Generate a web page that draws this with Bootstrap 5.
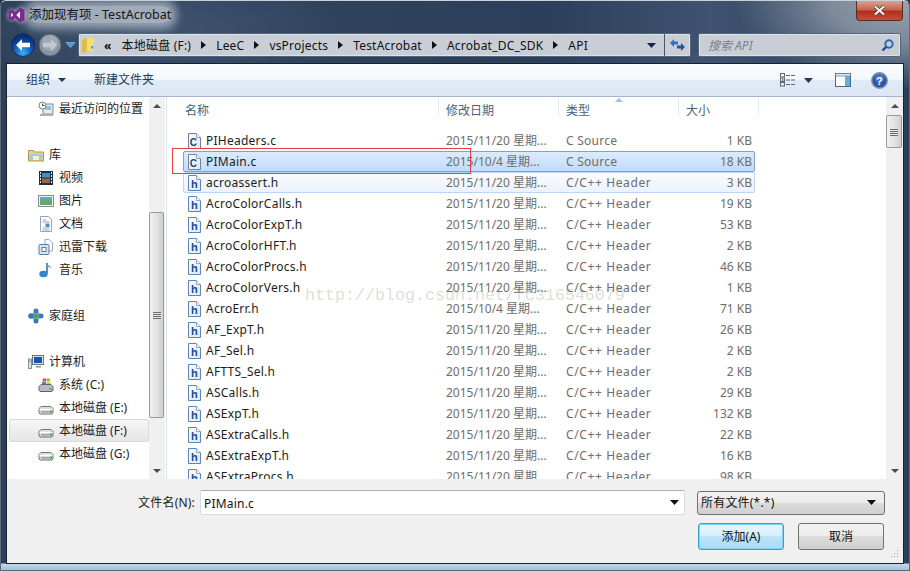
<!DOCTYPE html>
<html lang="zh-CN">
<head>
<meta charset="utf-8">
<title>添加现有项 - TestAcrobat</title>
<link href="https://cdn.jsdelivr.net/npm/bootstrap@5.3.0/dist/css/bootstrap.min.css" rel="stylesheet">
<style>
html,body{margin:0;padding:0;width:910px;height:571px;overflow:hidden;background:#26384f}
body{font-family:"Noto Sans","Noto Sans CJK SC",sans-serif;font-size:12px;line-height:16px;color:#1c1c1c}
.aero{width:910px;height:571px;position:relative;overflow:hidden;border:1px solid #5d6b7c;border-top-color:#c9d0d8;border-radius:6px 6px 0 0;
 background:
 linear-gradient(0deg,#9fc2dc 0,#c4d8e8 6px,transparent 7px),
 radial-gradient(170px 90px at 905px 0,#9aa3ad 0,#7c8a9b 45%,transparent 100%),
 radial-gradient(190px 60px at 160px 30px,#3f5370 0,transparent 100%),
 linear-gradient(90deg,#2d4059 0,#33465f 10%,#2b3f5a 60%,#3f5370 78%,#2b3f58 100%)}
.capbar{height:32px;padding-left:7px}
.appglyph{margin-top:6px;filter:drop-shadow(0 0 2px rgba(255,255,255,.7))}
.captxt{margin:5px 0 0 4px;height:17px;line-height:17px;font-size:12.5px;background:rgba(225,230,235,.62);box-shadow:0 0 8px 6px rgba(225,230,235,.55);border-radius:8px;color:#151515}
.closer{width:47px;height:20px;margin-right:6px;border:1px solid #51301f;border-top:0;border-radius:0 0 4px 4px;background:linear-gradient(180deg,#d9a294 0,#c9634e 45%,#b32f1c 55%,#c0503c 100%)}
.navrow{height:24px;margin-bottom:6px;padding-left:10px;padding-right:8px}
.fwd{margin-left:3px}
.ddcaret{margin:0 2px 0 3px}
.addr{width:613px;height:24px;background:#c9ced6;border:1px solid #54657b;box-shadow:inset 0 0 0 1px #dfe3e8;border-radius:2px;color:#111}
.crumbs{gap:10px;padding-left:3px;letter-spacing:.2px}
.crumbs span,.finder span{padding-top:1px}
.addr-tail{width:26px;height:100%;border-left:1px solid #49586b}
.finder{width:203px;height:24px;margin-left:7px;padding:0 6px 0 9px;background:#c9ced6;border:1px solid #54657b;box-shadow:inset 0 0 0 1px #dfe3e8;border-radius:2px;color:#7b7f86;font-style:italic}
.client{margin:0 5px;height:501px;border:1px solid #18222f;background:#fff}
.cmdbar{height:33px;flex:none;padding:0 15px 0 19px;background:linear-gradient(180deg,#fbfdff 0,#f3f8fd 48%,#e1eaf6 50%,#dce6f4 100%);border-bottom:1px solid #a7b6c9;color:#1e395b}
.newdir{margin-left:28px}
.cmd-caret{margin-left:8px}
.cmd-pane{margin-left:22px}
.cmd-help{margin-left:20px}
.panes{height:382px}
.navpane{width:160px;flex:none;border-right:1px solid #dfe5ee}
.treecol{width:142px;flex:none}
.treeitem{height:23px;padding-left:21px;gap:5px;white-space:nowrap}
.treeitem.sub{padding-left:31px}
.treeitem.cur{margin-left:2px;padding-left:28px;background:linear-gradient(180deg,#f6f6f6,#e6e6e6);border:1px solid #dadada;border-radius:2px}
.gap23{height:23px}
.sbar{background:#f0f0f0;flex:none;position:relative}
.sbar-l{width:16px;margin-right:1px}
.sbar-r{width:17px}
.sb-up,.sb-dn{position:absolute;left:50%;margin-left:-4px;width:0;height:0;border-left:4px solid transparent;border-right:4px solid transparent}
.sb-up{top:7px;border-bottom:4px solid #4d4d4d}
.sb-dn{bottom:6px;border-top:4px solid #4d4d4d}
.sb-thumb{position:absolute;left:0;right:1px;background:linear-gradient(90deg,#f2f2f2,#e2e2e2 55%,#cfcfcf);border:1px solid #9a9a9a;border-radius:2px}
.th-tree{top:115px;height:206px}
.th-list{top:18px;height:33px}
.grip{position:absolute;left:50%;top:50%;width:8px;height:7px;margin:-3px 0 0 -4px;background:repeating-linear-gradient(180deg,#6c6c6c 0,#6c6c6c 1px,#e8e8e8 1px,#e8e8e8 2px)}
.listpane{position:relative;overflow:hidden}
.listhead{height:33px;position:relative;color:#4c607a;display:grid;grid-template-columns:272px 120px 120px 80px}
.hcell{padding:6px 0 0 7px;height:23px;background:linear-gradient(180deg,transparent 0,#dfe8f3 10%,#dfe8f3 60%,transparent 100%) no-repeat right top/1px 100%}
.hcell:first-child{padding-left:18px}
.sortmark{position:absolute;left:448px;top:1px;width:0;height:0;border-left:4px solid transparent;border-right:4px solid transparent;border-bottom:4px solid #9cc0e2}
.frow{height:21px;width:572px;margin-left:16px;border:1px solid transparent;border-radius:2px;display:grid;grid-template-columns:262px 120px 100px 86px;align-items:center;color:#6d6d6d;white-space:nowrap}
.frow .fname{color:#1c1c1c;padding-left:4px;gap:5px;letter-spacing:.25px}
.frow .fsize{text-align:right}
.tsrc{letter-spacing:.25px}
.thdr{letter-spacing:.62px}
.frow.sel{background:linear-gradient(180deg,#dcebfc,#c1dbfc);border-color:#7da2ce}
.frow.hov{background:linear-gradient(180deg,#fafbfd,#ebf3fd);border-color:#b8d6fb}
.dockbar{height:84px;background:#f0f0f0;position:relative}
.dockline{gap:5px;padding:11px 18px 0 0}
.dockline span{letter-spacing:.2px;padding-top:1px}
.form-control.fnbox{width:485px;height:25px;padding:0 5px 0 3px;border:1px solid #d5dbe3;border-top-color:#abadb3;border-radius:2px;font-size:12px;color:#111;background:#fff;line-height:23px}
.choice{width:188px;height:24px;margin-left:7px;padding:0 8px 0 3px;border:1px solid #707070;border-radius:3px;color:#111;background:linear-gradient(180deg,#f2f2f2 0,#ebebeb 48%,#dcdcdc 50%,#cfcfcf 100%)}
.dockbtns{gap:14px;padding:8px 19px 0 0}
.btn.wbtn{width:86px;height:27px;padding:0;font-size:12px;line-height:25px;color:#111;border:1px solid #707070;border-radius:3px;background:linear-gradient(180deg,#f2f2f2 0,#ebebeb 48%,#dcdcdc 50%,#cfcfcf 100%)}
.btn.wbtn.on{border-color:#3c9fd0;box-shadow:inset 0 0 0 1px #7fd2f4;background:linear-gradient(180deg,#e8f6fd 0,#d6effc 48%,#bce4fa 50%,#a9dbf6 100%)}
.redbox{position:absolute;left:171px;top:147px;width:299px;height:26px;border:1px solid #ee3b44;pointer-events:none}
.stamp{position:absolute;left:304px;top:285px;font-family:"Liberation Mono",monospace;font-size:16.67px;line-height:20px;color:rgba(150,148,135,.32);pointer-events:none;white-space:nowrap}
.sizegrip{position:absolute;right:4px;bottom:4px}
.svgdefs{position:absolute}
</style>
</head>
<body>
<svg width="0" height="0" class="svgdefs" aria-hidden="true">
 <defs>
  <linearGradient id="pg" x1="0" y1="0" x2="1" y2="1"><stop offset="0" stop-color="#fff"/><stop offset="1" stop-color="#dbe6f5"/></linearGradient>
  <symbol id="fc" viewBox="0 0 13 16"><path d="M.5.500h8l4 4v11H.5z" fill="url(#pg)" stroke="#6d80a3"/><path d="M8.500.500v4h4" fill="#fff" stroke="#8c9bb5"/><text x="1.800" y="12.500" font-family="Liberation Sans" font-weight="700" font-size="10" fill="#1f3f70">C</text></symbol>
  <symbol id="fh" viewBox="0 0 13 16"><path d="M.5.500h8l4 4v11H.5z" fill="url(#pg)" stroke="#5f82bb"/><path d="M8.500.500v4h4" fill="#fff" stroke="#8fa6cc"/><text x="3" y="12.500" font-family="Liberation Sans" font-weight="700" font-size="11" fill="#174a96">h</text></symbol>
  <symbol id="disk" viewBox="0 0 16 16"><path d="M1 8.500 3 6.500h10l2 2v4.500l-1 1H2l-1-1z" fill="#dfe2e4" stroke="#6e7478"/><path d="M1.500 9.500h13" stroke="#fff"/><rect x="3" y="11" width="9" height="1.600" fill="#9da3a8"/><rect x="12" y="10.500" width="2" height="2.200" fill="#46b334"/></symbol>
 </defs>
</svg>
<div class="aero d-flex flex-column">
 <div class="capbar d-flex align-items-start">
  <svg class="appglyph" width="17" height="16" viewBox="0 0 17 16"><path d="M12 .5 16.500 2.800v10.400L12 15.500 7 11l-3 2.500L.5 12V4L4 2.500 7 5z" fill="#7b2a94"/><path d="M12 4.300v7.400L8.300 8zM3 5.800 5.300 8 3 10.200z" fill="#fff"/></svg>
  <div class="captxt">添加现有项 - TestAcrobat</div>
  <div class="closer ms-auto d-flex align-items-center justify-content-center">
   <svg width="13" height="11" viewBox="0 0 13 11"><path d="M2 1.500 11 9.500M11 1.500 2 9.500" stroke="#3d2620" stroke-width="3.400"/><path d="M2 1.500 11 9.500M11 1.500 2 9.500" stroke="#fff" stroke-width="2.200"/></svg>
  </div>
 </div>
 <div class="navrow d-flex align-items-center">
  <svg width="24" height="24" viewBox="0 0 24 24"><defs><radialGradient id="bb" cx=".5" cy=".85" r=".7"><stop offset="0" stop-color="#35b6f2"/><stop offset=".6" stop-color="#0f54b8"/><stop offset="1" stop-color="#0a2f78"/></radialGradient></defs><circle cx="12" cy="12" r="11.500" fill="url(#bb)" stroke="#1a2c4a"/><path d="M5 12l6-6v3.800h8v4.400h-8V18z" fill="#fff"/></svg>
  <svg class="fwd" width="24" height="24" viewBox="0 0 24 24"><circle cx="12" cy="12" r="11" fill="#8a95a2" stroke="#56606d"/><circle cx="12" cy="10" r="8" fill="#a8b0ba" opacity=".7"/><path d="M19 12l-6-6v3.800H5v4.400h8V18z" fill="#c3c9d0"/></svg>
  <svg class="ddcaret" width="11" height="8" viewBox="0 0 11 8"><path d="M1 1.500h9L5.500 6.500z" fill="#3f9ce0" stroke="#8fcdf5" stroke-width=".6"/></svg>
  <div class="addr d-flex align-items-center">
   <div class="crumbs d-flex align-items-center flex-grow-1">
    <svg width="12" height="17" viewBox="0 0 12 17"><path d="M4 1h8v13H4z" fill="#f6dd7c"/><path d="M0 3 5 1v13l-5 2.500z" fill="#e2bb45"/><path d="M9 9h2.500v2.500H9z" fill="#5aa0d8"/></svg>
    <span class="fw-bold">«</span>
    <span>本地磁盘 (F:)</span>
    <svg width="5" height="8" viewBox="0 0 5 8"><path d="M0 0l5 4-5 4z" fill="#111"/></svg>
    <span>LeeC</span>
    <svg width="5" height="8" viewBox="0 0 5 8"><path d="M0 0l5 4-5 4z" fill="#111"/></svg>
    <span>vsProjects</span>
    <svg width="5" height="8" viewBox="0 0 5 8"><path d="M0 0l5 4-5 4z" fill="#111"/></svg>
    <span>TestAcrobat</span>
    <svg width="5" height="8" viewBox="0 0 5 8"><path d="M0 0l5 4-5 4z" fill="#111"/></svg>
    <span>Acrobat_DC_SDK</span>
    <svg width="5" height="8" viewBox="0 0 5 8"><path d="M0 0l5 4-5 4z" fill="#111"/></svg>
    <span>API</span>
   </div>
   <svg class="me-2" width="9" height="5" viewBox="0 0 9 5"><path d="M0 0h9L4.500 5z" fill="#15264a"/></svg>
   <div class="addr-tail d-flex align-items-center justify-content-center">
    <svg width="16" height="16" viewBox="0 0 16 16"><path d="M0 6l4-4v2.500h4v3H4V10z" fill="#2f6fc0"/><path d="M15 10l-4 4v-2.500H7v-3h4V6z" fill="#1d55a8"/></svg>
   </div>
  </div>
  <div class="finder d-flex align-items-center justify-content-between">
   <span>搜索 API</span>
   <svg width="13" height="13" viewBox="0 0 13 13"><circle cx="8" cy="5" r="3.700" fill="none" stroke="#2a67b5" stroke-width="2"/><path d="M5.200 7.800 1.500 11.500" stroke="#1a4f98" stroke-width="2.400"/></svg>
  </div>
 </div>
 <div class="client d-flex flex-column">
  <div class="cmdbar d-flex align-items-center">
   <span>组织</span>
   <svg class="ms-2" width="8" height="4" viewBox="0 0 8 4"><path d="M0 0h8L4 4z" fill="#1e395b"/></svg>
   <span class="newdir">新建文件夹</span>
   <svg class="ms-auto" width="16" height="14" viewBox="0 0 16 14"><g fill="none" stroke="#5a6b80"><rect x=".5" y=".5" width="4" height="3.500"/><rect x=".5" y="5" width="4" height="3.500"/><rect x=".5" y="9.500" width="4" height="3.500"/><path d="M6 2.500h9.500M6 7h9.500M6 11.500h9.500" stroke-dasharray="4 1"/></g><rect x="2" y="6.200" width="1.500" height="1.500" fill="#d04040"/></svg>
   <svg class="cmd-caret" width="9" height="5" viewBox="0 0 9 5"><path d="M0 0h9L4.500 5z" fill="#1e395b"/></svg>
   <svg class="cmd-pane" width="16" height="14" viewBox="0 0 16 14"><rect x=".5" y=".5" width="15" height="13" fill="#fff" stroke="#51667f"/><rect x=".5" y=".5" width="15" height="2.500" fill="#dfe7f0" stroke="#51667f" stroke-width=".6"/><rect x="10" y="3" width="5" height="10" fill="#5cb1d8"/></svg>
   <svg class="cmd-help" width="17" height="17" viewBox="0 0 17 17"><circle cx="8.500" cy="8.500" r="7.800" fill="#2a55b0" stroke="#8d959e" stroke-width="1.400"/><circle cx="8.500" cy="6" r="5" fill="#5f86d2" opacity=".55"/><text x="5" y="13" font-family="Liberation Sans" font-weight="700" font-size="11" fill="#fff">?</text></svg>
  </div>
  <div class="panes d-flex">
   <div class="navpane d-flex">
    <div class="treecol">
     <div class="treeitem sub d-flex align-items-center">
      <svg width="16" height="16" viewBox="0 0 16 16"><rect x="5" y="3" width="10" height="10" fill="#e6eaed" stroke="#7f8a92"/><circle cx="4.500" cy="4.500" r="3.500" fill="#fff" stroke="#717a82"/><path d="M4.500 2.500v2h2" stroke="#444" fill="none"/><path d="M7 6h6M7 8h6" stroke="#3e9ad0"/><path d="M2 13h13v2H2z" fill="#aab1b8"/></svg>
      <span>最近访问的位置</span>
     </div>
     <div class="gap23"></div>
     <div class="treeitem d-flex align-items-center">
      <svg width="16" height="16" viewBox="0 0 16 16"><path d="M.5 3.500h5l1 1.500h9v9H.5z" fill="#eed27a" stroke="#b1954a"/><path d="M1.500 7h13v6h-13z" fill="#9fcbe6"/><path d="M5 9h6v4H5z" fill="#f7f0c8"/></svg>
      <span>库</span>
     </div>
     <div class="treeitem sub d-flex align-items-center">
      <svg width="16" height="16" viewBox="0 0 16 16"><rect x="1" y="1" width="14" height="14" fill="#15324c"/><path d="M4 3h8v4.500H4z" fill="#3f92c8"/><path d="M4 8.500h8V13H4z" fill="#a0672e"/><path d="M2 2h1v2H2zm0 3h1v2H2zm0 3h1v2H2zm0 3h1v2H2zm11-9h1v2h-1zm0 3h1v2h-1zm0 3h1v2h-1zm0 3h1v2h-1z" fill="#dfe8ee"/></svg>
      <span>视频</span>
     </div>
     <div class="treeitem sub d-flex align-items-center">
      <svg width="16" height="16" viewBox="0 0 16 16"><rect x=".5" y="2.500" width="15" height="11" fill="#eef1f3" stroke="#858d94"/><path d="M2 4h12v4H2z" fill="#5ea6d6"/><path d="M2 8c3-2 7-2 12 0v4H2z" fill="#6fa564"/></svg>
      <span>图片</span>
     </div>
     <div class="treeitem sub d-flex align-items-center">
      <svg width="16" height="16" viewBox="0 0 16 16"><path d="M2.500.5h8l3 3v12h-11z" fill="#fff" stroke="#9aa3b0"/><path d="M4.500 4h4M4.500 6h7M4.500 12h7M4.500 14h7" stroke="#9aa3c0"/><rect x="7.500" y="7.500" width="4" height="3.500" fill="#4d8fc7"/></svg>
      <span>文档</span>
     </div>
     <div class="treeitem sub d-flex align-items-center">
      <svg width="16" height="16" viewBox="0 0 16 16"><path d="M7 .5h4l3.500 3.500v8H7z" fill="#fff" stroke="#9aa7b8"/><rect x="1" y="5.500" width="10" height="10" rx="1" fill="#d8e4f1" stroke="#5f7d9f"/><rect x="4" y="8.500" width="4" height="4" fill="#fff" stroke="#5f7d9f"/></svg>
      <span>迅雷下载</span>
     </div>
     <div class="treeitem sub d-flex align-items-center">
      <svg width="16" height="16" viewBox="0 0 16 16"><path d="M9 1v10.500" stroke="#2e6fb4" stroke-width="1.600"/><path d="M9 1c1 3 4 3 5 6-1-1.500-3-2-5-2z" fill="#5aa4dd"/><ellipse cx="5.500" cy="12" rx="4.200" ry="3.300" fill="#2f85d0"/></svg>
      <span>音乐</span>
     </div>
     <div class="gap23"></div>
     <div class="treeitem d-flex align-items-center">
      <svg width="16" height="16" viewBox="0 0 16 16"><path d="M8 3 3 8l5 5 5-5z" fill="none" stroke="#6d97c8" stroke-width="1.500"/><circle cx="8" cy="8" r="2.700" fill="#4fa64a"/><circle cx="8" cy="3" r="2.500" fill="#3a74c4"/><circle cx="3" cy="8" r="2.800" fill="#3a74c4"/><circle cx="13" cy="8" r="2.500" fill="#3a74c4"/><circle cx="8" cy="13" r="2.500" fill="#3a74c4"/></svg>
      <span>家庭组</span>
     </div>
     <div class="gap23"></div>
     <div class="treeitem d-flex align-items-center">
      <svg width="16" height="16" viewBox="0 0 16 16"><rect x="4.500" y="1.500" width="11" height="9" fill="#dde2e6" stroke="#6d757c"/><rect x="6" y="3" width="8" height="6" fill="#1452b8"/><path d="M8 12h5v1.500H8z" fill="#8b9298"/><rect x=".5" y="5" width="3" height="9.500" fill="#dfe3e6" stroke="#6d757c" stroke-width=".8"/><rect x="1.300" y="6.500" width="1.400" height="1.500" fill="#45b23a"/></svg>
      <span>计算机</span>
     </div>
     <div class="treeitem sub d-flex align-items-center">
      <svg width="16" height="16" viewBox="0 0 16 16"><path d="M1 9.500 3 7.500h10l2 2v4l-1 1H2l-1-1z" fill="#b6bdc3" stroke="#5c6369"/><rect x="11.500" y="11" width="2" height="2" fill="#46b334"/><path d="M5 1.500h3V4H4.500z" fill="#e2502e"/><path d="M8.500 1.500h3L12 4H8.500z" fill="#7dbb3a"/><path d="M4.300 4.500H8V7H3.800z" fill="#2e8fd8"/><path d="M8.500 4.500H12.200L12.600 7H8.500z" fill="#f2c21e"/></svg>
      <span>系统 (C:)</span>
     </div>
     <div class="treeitem sub d-flex align-items-center">
      <svg width="16" height="16"><use href="#disk"/></svg>
      <span>本地磁盘 (E:)</span>
     </div>
     <div class="treeitem sub cur d-flex align-items-center">
      <svg width="16" height="16"><use href="#disk"/></svg>
      <span>本地磁盘 (F:)</span>
     </div>
     <div class="treeitem sub d-flex align-items-center">
      <svg width="16" height="16"><use href="#disk"/></svg>
      <span>本地磁盘 (G:)</span>
     </div>
    </div>
    <div class="sbar sbar-l">
     <div class="sb-up"></div>
     <div class="sb-thumb th-tree"><div class="grip"></div></div>
     <div class="sb-dn"></div>
    </div>
   </div>
   <div class="listpane flex-grow-1">
    <div class="listhead">
     <div class="hcell">名称</div>
     <div class="hcell">修改日期</div>
     <div class="hcell">类型</div>
     <div class="hcell">大小</div>
     <div class="sortmark"></div>
    </div>
    <div class="frow"><div class="fname d-flex align-items-center"><svg width="13" height="16"><use href="#fc"/></svg><span>PIHeaders.c</span></div><div>2015/11/20 星期...</div><div class="tsrc">C Source</div><div class="fsize">1 KB</div></div>
    <div class="frow sel"><div class="fname d-flex align-items-center"><svg width="13" height="16"><use href="#fc"/></svg><span>PIMain.c</span></div><div>2015/10/4 星期...</div><div class="tsrc">C Source</div><div class="fsize">18 KB</div></div>
    <div class="frow hov"><div class="fname d-flex align-items-center"><svg width="13" height="16"><use href="#fh"/></svg><span>acroassert.h</span></div><div>2015/11/20 星期...</div><div class="thdr">C/C++ Header</div><div class="fsize">3 KB</div></div>
    <div class="frow"><div class="fname d-flex align-items-center"><svg width="13" height="16"><use href="#fh"/></svg><span>AcroColorCalls.h</span></div><div>2015/11/20 星期...</div><div class="thdr">C/C++ Header</div><div class="fsize">19 KB</div></div>
    <div class="frow"><div class="fname d-flex align-items-center"><svg width="13" height="16"><use href="#fh"/></svg><span>AcroColorExpT.h</span></div><div>2015/11/20 星期...</div><div class="thdr">C/C++ Header</div><div class="fsize">53 KB</div></div>
    <div class="frow"><div class="fname d-flex align-items-center"><svg width="13" height="16"><use href="#fh"/></svg><span>AcroColorHFT.h</span></div><div>2015/11/20 星期...</div><div class="thdr">C/C++ Header</div><div class="fsize">2 KB</div></div>
    <div class="frow"><div class="fname d-flex align-items-center"><svg width="13" height="16"><use href="#fh"/></svg><span>AcroColorProcs.h</span></div><div>2015/11/20 星期...</div><div class="thdr">C/C++ Header</div><div class="fsize">46 KB</div></div>
    <div class="frow"><div class="fname d-flex align-items-center"><svg width="13" height="16"><use href="#fh"/></svg><span>AcroColorVers.h</span></div><div>2015/11/20 星期...</div><div class="thdr">C/C++ Header</div><div class="fsize">1 KB</div></div>
    <div class="frow"><div class="fname d-flex align-items-center"><svg width="13" height="16"><use href="#fh"/></svg><span>AcroErr.h</span></div><div>2015/10/4 星期...</div><div class="thdr">C/C++ Header</div><div class="fsize">71 KB</div></div>
    <div class="frow"><div class="fname d-flex align-items-center"><svg width="13" height="16"><use href="#fh"/></svg><span>AF_ExpT.h</span></div><div>2015/11/20 星期...</div><div class="thdr">C/C++ Header</div><div class="fsize">26 KB</div></div>
    <div class="frow"><div class="fname d-flex align-items-center"><svg width="13" height="16"><use href="#fh"/></svg><span>AF_Sel.h</span></div><div>2015/11/20 星期...</div><div class="thdr">C/C++ Header</div><div class="fsize">2 KB</div></div>
    <div class="frow"><div class="fname d-flex align-items-center"><svg width="13" height="16"><use href="#fh"/></svg><span>AFTTS_Sel.h</span></div><div>2015/11/20 星期...</div><div class="thdr">C/C++ Header</div><div class="fsize">2 KB</div></div>
    <div class="frow"><div class="fname d-flex align-items-center"><svg width="13" height="16"><use href="#fh"/></svg><span>ASCalls.h</span></div><div>2015/11/20 星期...</div><div class="thdr">C/C++ Header</div><div class="fsize">29 KB</div></div>
    <div class="frow"><div class="fname d-flex align-items-center"><svg width="13" height="16"><use href="#fh"/></svg><span>ASExpT.h</span></div><div>2015/11/20 星期...</div><div class="thdr">C/C++ Header</div><div class="fsize">132 KB</div></div>
    <div class="frow"><div class="fname d-flex align-items-center"><svg width="13" height="16"><use href="#fh"/></svg><span>ASExtraCalls.h</span></div><div>2015/11/20 星期...</div><div class="thdr">C/C++ Header</div><div class="fsize">22 KB</div></div>
    <div class="frow"><div class="fname d-flex align-items-center"><svg width="13" height="16"><use href="#fh"/></svg><span>ASExtraExpT.h</span></div><div>2015/11/20 星期...</div><div class="thdr">C/C++ Header</div><div class="fsize">16 KB</div></div>
    <div class="frow"><div class="fname d-flex align-items-center"><svg width="13" height="16"><use href="#fh"/></svg><span>ASExtraProcs.h</span></div><div>2015/11/20 星期...</div><div class="thdr">C/C++ Header</div><div class="fsize">98 KB</div></div>
   </div>
   <div class="sbar sbar-r">
    <div class="sb-up"></div>
    <div class="sb-thumb th-list"><div class="grip"></div></div>
    <div class="sb-dn"></div>
   </div>
  </div>
  <div class="dockbar">
   <div class="dockline d-flex justify-content-end align-items-center">
    <span>文件名(N):</span>
    <div class="form-control fnbox d-flex align-items-center justify-content-between"><span>PIMain.c</span><svg width="9" height="5" viewBox="0 0 9 5"><path d="M0 0h9L4.500 5z" fill="#111"/></svg></div>
    <div class="choice d-flex align-items-center justify-content-between"><span>所有文件(*.*)</span><svg width="9" height="5" viewBox="0 0 9 5"><path d="M0 0h9L4.500 5z" fill="#111"/></svg></div>
   </div>
   <div class="dockbtns d-flex justify-content-end">
    <button type="button" class="btn wbtn on">添加(A)</button>
    <button type="button" class="btn wbtn">取消</button>
   </div>
   <svg class="sizegrip" width="10" height="10" viewBox="0 0 10 10"><path d="M8 1h1v1H8zM8 4h1v1H8zM5 4h1v1H5zM8 7h1v1H8zM5 7h1v1H5zM2 7h1v1H2z" fill="#a0a0a0"/></svg>
  </div>
 </div>
 <div class="redbox"></div>
 <div class="stamp">http://blog.csdn.net/fc316546079</div>
</div>
</body>
</html>
